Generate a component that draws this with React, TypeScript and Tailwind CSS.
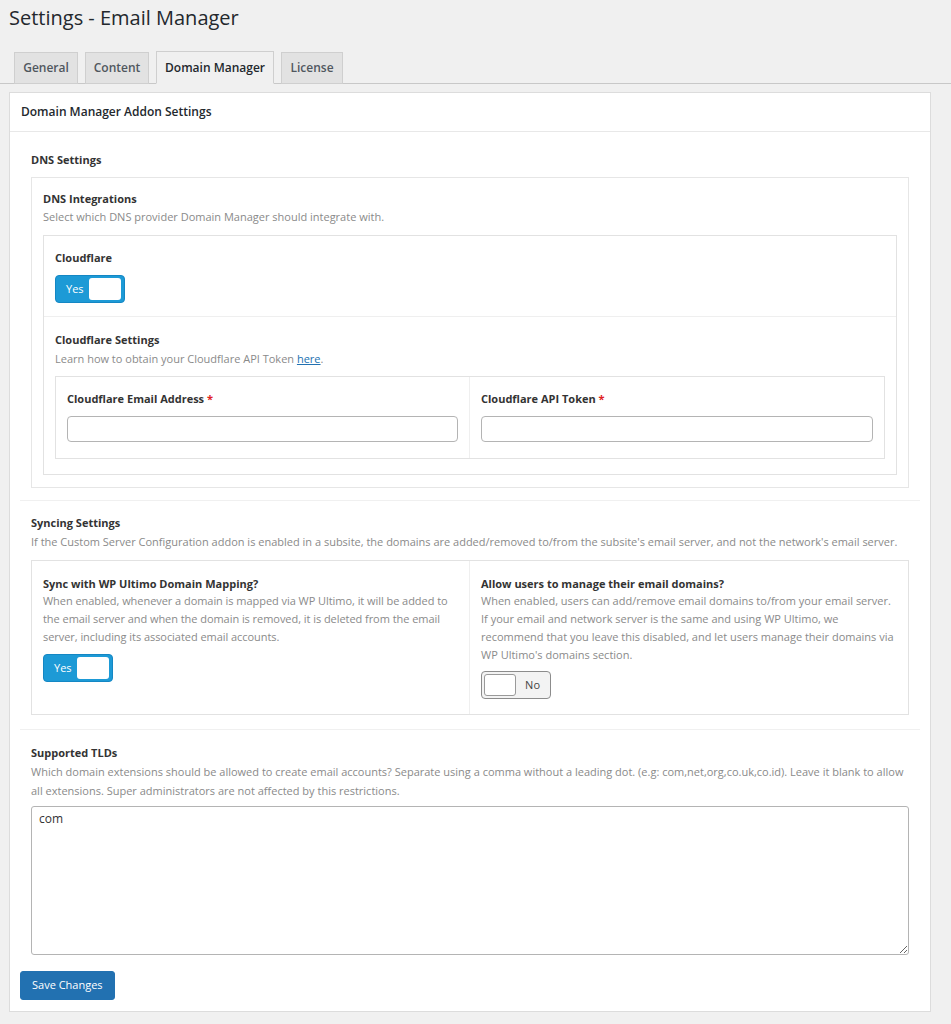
import React from "react";

const font = { fontFamily: '"Open Sans", "Noto Sans", sans-serif' };

function Toggle({ on }: { on: boolean }) {
  if (on) {
    return (
      <div className="flex h-[28px] w-[70px] items-center rounded-[4px] border border-[#1487c4] bg-[#1d9ad6] pl-[10px] pr-[3px]">
        <span className="flex-1 text-[11px] text-white">Yes</span>
        <span className="h-[22px] w-[32px] rounded-[3px] bg-white"></span>
      </div>
    );
  }
  return (
    <div className="flex h-[28px] w-[70px] items-center rounded-[4px] border border-[#8c8c8c] bg-[#f3f3f3] pl-[2px] pr-[10px]">
      <span className="h-[22px] w-[32px] rounded-[3px] border border-[#9a9a9a] bg-white"></span>
      <span className="flex-1 text-right text-[11px] text-[#444]">No</span>
    </div>
  );
}

function Req() {
  return <span className="text-[#e02020]"> *</span>;
}

export default function App() {
  return (
    <div className="min-h-[1024px] bg-[#f0f0f0] text-[#23282d]" style={font}>
      <div className="pl-[9px] pt-[4px]">
        <h1 className="text-[20px] leading-[28px] text-[#23282d]">Settings - Email Manager</h1>
      </div>
      <div className="mt-[19px] flex items-end gap-[7px] border-b border-[#c8c8c8] pl-[14px]">
        <div className="mb-[-1px] flex h-[32px] w-[64px] items-center justify-center border border-[#cfcfcf] bg-[#e2e2e2] text-[12px] font-semibold text-[#50575e]">General</div>
        <div className="mb-[-1px] flex h-[32px] w-[64px] items-center justify-center border border-[#cfcfcf] bg-[#e2e2e2] text-[12px] font-semibold text-[#50575e]">Content</div>
        <div className="mb-[-1px] flex h-[33px] w-[118px] items-center justify-center border border-b-[#f0f0f0] border-[#cfcfcf] bg-[#f0f0f0] text-[12px] font-semibold text-[#23282d]">Domain Manager</div>
        <div className="mb-[-1px] flex h-[32px] w-[62px] items-center justify-center border border-[#cfcfcf] bg-[#e2e2e2] text-[12px] font-semibold text-[#50575e]">License</div>
      </div>

      <div className="ml-[9px] mt-[8px] w-[922px] border border-[#dcdcdc] bg-white">
        <div className="flex h-[39px] items-center border-b border-[#e8e8e8] pl-[11px] text-[12px] font-semibold text-[#23282d]">
          Domain Manager Addon Settings
        </div>

        <div className="px-[10px]">
          {/* DNS Settings */}
          <div className="px-[11px] pb-[12px] pt-[20px]">
            <div className="text-[11px] font-bold leading-[16px] text-[#333]">DNS Settings</div>
            <div className="mt-[9px] border border-[#e6e6e6] px-[11px] pb-[12px] pt-[12px]">
              <div className="text-[11px] font-bold leading-[17px] text-[#333]">DNS Integrations</div>
              <div className="text-[11px] leading-[20px] text-[#8a8a8a]">Select which DNS provider Domain Manager should integrate with.</div>
              <div className="mt-[8px] border border-[#e2e2e2]">
                <div className="border-b border-[#efefef] px-[11px] pb-[13px] pt-[13px]">
                  <div className="text-[11px] font-bold leading-[17px] text-[#333]">Cloudflare</div>
                  <div className="mt-[9px]">
                    <Toggle on={true} />
                  </div>
                </div>
                <div className="px-[11px] pb-[15px] pt-[14px]">
                  <div className="text-[11px] font-bold leading-[17px] text-[#333]">Cloudflare Settings</div>
                  <div className="text-[11px] leading-[21px] text-[#8a8a8a]">
                    Learn how to obtain your Cloudflare API Token <span className="text-[#2271b1] underline">here</span>.
                  </div>
                  <div className="mt-[7px] grid grid-cols-2 border border-[#e2e2e2]">
                    <div className="border-r border-[#efefef] px-[11px] pb-[16px] pt-[13px]">
                      <div className="text-[11px] font-bold leading-[17px] text-[#333]">
                        Cloudflare Email Address<Req />
                      </div>
                      <div className="mt-[9px] h-[26px] rounded-[4px] border border-[#b4b4b4] bg-white"></div>
                    </div>
                    <div className="px-[11px] pb-[16px] pt-[13px]">
                      <div className="text-[11px] font-bold leading-[17px] text-[#333]">
                        Cloudflare API Token<Req />
                      </div>
                      <div className="mt-[9px] h-[26px] rounded-[4px] border border-[#b4b4b4] bg-white"></div>
                    </div>
                  </div>
                </div>
              </div>
            </div>
          </div>

          {/* Syncing Settings */}
          <div className="border-t border-[#f0f0f0] px-[11px] pb-[14px] pt-[13px]">
            <div className="text-[11px] font-bold leading-[18px] text-[#333]">Syncing Settings</div>
            <div className="text-[11px] leading-[20px] text-[#8a8a8a]">
              If the Custom Server Configuration addon is enabled in a subsite, the domains are added/removed to/from the subsite's email server, and not the network's email server.
            </div>
            <div className="mt-[8px] grid grid-cols-2 border border-[#e2e2e2]">
              <div className="border-r border-[#efefef] px-[11px] pb-[15px] pt-[14px]">
                <div className="text-[11px] font-bold leading-[17px] text-[#333]">Sync with WP Ultimo Domain Mapping?</div>
                <div className="text-[11px] leading-[18px] tracking-[-0.05px] text-[#8a8a8a]">
                  When enabled, whenever a domain is mapped via WP Ultimo, it will be added to the email server and when the domain is removed, it is deleted from the email server, including its associated email accounts.
                </div>
                <div className="mt-[8px]">
                  <Toggle on={true} />
                </div>
              </div>
              <div className="px-[11px] pb-[15px] pt-[14px]">
                <div className="text-[11px] font-bold leading-[17px] text-[#333]">Allow users to manage their email domains?</div>
                <div className="text-[11px] leading-[18px] text-[#8a8a8a]">
                  When enabled, users can add/remove email domains to/from your email server. If your email and network server is the same and using WP Ultimo, we recommend that you leave this disabled, and let users manage their domains via WP Ultimo's domains section.
                </div>
                <div className="mt-[7px]">
                  <Toggle on={false} />
                </div>
              </div>
            </div>
          </div>

          {/* Supported TLDs */}
          <div className="border-t border-[#f0f0f0] px-[11px] pb-[16px] pt-[14px]">
            <div className="text-[11px] font-bold leading-[18px] text-[#333]">Supported TLDs</div>
            <div className="text-[11px] leading-[19px] text-[#8a8a8a]">
              Which domain extensions should be allowed to create email accounts? Separate using a comma without a leading dot. (e.g: com,net,org,co.uk,co.id). Leave it blank to allow all extensions. Super administrators are not affected by this restrictions.
            </div>
            <textarea
              defaultValue="com"
              className="mt-[6px] block h-[149px] w-full resize-y rounded-[3px] border border-[#b4b4b4] px-[7px] py-[4px] text-[12px] leading-[16px] text-[#333] outline-none"
              style={font}
            ></textarea>
          </div>
        </div>

        <div className="px-[10px] pb-[11px]">
          <button className="h-[29px] rounded-[3px] border border-[#2271b1] bg-[#2271b1] px-[11px] text-[11px] text-white" style={font}>
            Save Changes
          </button>
        </div>
      </div>
    </div>
  );
}
